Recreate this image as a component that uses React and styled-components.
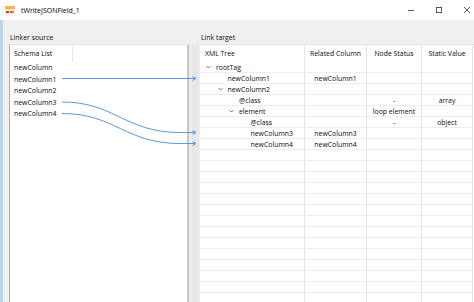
import React from 'react';
import styled, { createGlobalStyle } from 'styled-components';

const GlobalStyle = createGlobalStyle`
  *, *::before, *::after { box-sizing: border-box; }
  html, body { margin: 0; padding: 0; background: #f0f0f0; }
  body { font-family: "Open Sans", "Noto Sans", sans-serif; }
`;

const Window = styled.div`
  position: relative;
  width: 474px;
  height: 302px;
  overflow: hidden;
  display: flex;
  flex-direction: column;
  background: #f0f0f0;
  color: #0a0a0a;
  font-size: 6.9px;
`;

const TitleBar = styled.div`
  height: 20px;
  flex: none;
  background: #ffffff;
  display: flex;
  align-items: center;
  padding-left: 5px;
`;

const TitleText = styled.span`
  margin-left: 6px;
  font-size: 7px;
  color: #000;
`;

const Controls = styled.div`
  margin-left: auto;
  display: flex;
  align-items: center;
  gap: 22px;
  padding-right: 4px;
`;

const Body = styled.div`
  flex: 1;
  min-height: 0;
  display: flex;
`;

const FrameEdge = styled.div`
  width: 3px;
  flex: none;
  background: #b9d4ee;
`;

const Section = styled.div`
  display: flex;
  flex-direction: column;
  min-width: 0;
  ${p => (p.$grow ? 'flex: 1;' : `width: ${p.$width}px; flex: none;`)}
  padding-left: ${p => p.$pad || 0}px;
`;

const SectionLabel = styled.div`
  height: 24px;
  flex: none;
  padding-top: 13px;
  padding-left: 1px;
  line-height: 10px;
`;

const SourcePanel = styled.div`
  flex: 1;
  background: #fff;
  border-left: 1px solid #adadad;
  border-top: 1px solid #e2e2e2;
  border-right: 2px solid #c6c6c6;
`;

const Sash = styled.div`
  width: 11px;
  flex: none;
  background: linear-gradient(to right, #ececec 0, #ececec 3px, #e7e7e7 3px, #e7e7e7 10px, #efefef 10px);
  margin-top: 24px;
`;

const TargetPanel = styled.div`
  flex: 1;
  background: #fff;
  border-top: 1px solid #e2e2e2;
  overflow: hidden;
`;

const ListHeader = styled.div`
  height: 17px;
  display: flex;
`;

const ListHeaderCell = styled.div`
  width: 63px;
  padding-left: 4px;
  display: flex;
  align-items: center;
  border-right: 1px solid #e6e6e6;
`;

const ListRow = styled.div`
  height: 11.5px;
  line-height: 11.5px;
  padding-left: 4px;
  white-space: nowrap;
`;

const Grid = styled.div`
  display: grid;
  grid-template-columns: 105px 62px 55px 51px;
  grid-auto-rows: 11px;
  grid-template-rows: 17px;
`;

const HeadCell = styled.div`
  display: flex;
  align-items: center;
  justify-content: ${p => (p.$left ? 'flex-start' : 'center')};
  padding-left: ${p => (p.$left ? 5 : 0)}px;
  border-right: 1px solid #e4e4e4;
  white-space: nowrap;
`;

const Cell = styled.div`
  display: flex;
  align-items: center;
  justify-content: ${p => (p.$left ? 'flex-start' : 'center')};
  border-right: 1px solid #e4e4e4;
  border-bottom: 1px solid #ededed;
  white-space: nowrap;
  padding-left: ${p => (p.$left ? 6 + p.$level * 11.5 : 0)}px;
`;

const Expander = styled.span`
  width: 10px;
  flex: none;
  display: inline-flex;
  align-items: center;
`;

const Overlay = styled.svg`
  position: absolute;
  left: 0;
  top: 0;
  pointer-events: none;
`;

const AppIcon = () => (
  <svg width="10" height="9" viewBox="0 0 10 9">
    <rect x="0" y="0" width="10" height="3.5" fill="#f2b84b" />
    <rect x="0" y="3.5" width="10" height="5.5" fill="#f6efe6" />
    <rect x="1" y="5" width="3" height="2" fill="#d83b2b" />
    <rect x="5" y="5" width="3.5" height="2" fill="#e05a3a" />
  </svg>
);

const Chevron = () => (
  <svg width="5" height="4" viewBox="0 0 5 4">
    <path d="M0.5 1 L2.5 3 L4.5 1" fill="none" stroke="#555" strokeWidth="0.8" />
  </svg>
);

const sourceRows = ['newColumn', 'newColumn1', 'newColumn2', 'newColumn3', 'newColumn4'];

const treeRows = [
  { name: 'rootTag', level: 0, exp: true, rel: '', status: '', value: '' },
  { name: 'newColumn1', level: 1, exp: false, rel: 'newColumn1', status: '', value: '' },
  { name: 'newColumn2', level: 1, exp: true, rel: '', status: '', value: '' },
  { name: '@class', level: 2, exp: false, rel: '', status: '-', value: 'array' },
  { name: 'element', level: 2, exp: true, rel: '', status: 'loop element', value: '' },
  { name: '@class', level: 3, exp: false, rel: '', status: '-', value: 'object' },
  { name: 'newColumn3', level: 3, exp: false, rel: 'newColumn3', status: '', value: '' },
  { name: 'newColumn4', level: 3, exp: false, rel: 'newColumn4', status: '', value: '' },
];

const emptyRows = Array.from({ length: 15 }, (_, i) => i);

const link = '#5b97dd';

export default function App() {
  return (
    <>
      <GlobalStyle />
      <Window>
        <TitleBar>
          <AppIcon />
          <TitleText>tWriteJSONField_1</TitleText>
          <Controls>
            <svg width="6" height="6" viewBox="0 0 6 6">
              <path d="M0 3.5 H6" stroke="#333" strokeWidth="0.8" />
            </svg>
            <svg width="6" height="6" viewBox="0 0 6 6">
              <rect x="0.4" y="0.4" width="5.2" height="5.2" fill="none" stroke="#333" strokeWidth="0.8" />
            </svg>
            <svg width="6" height="6" viewBox="0 0 6 6">
              <path d="M0 0 L6 6 M6 0 L0 6" stroke="#333" strokeWidth="0.8" />
            </svg>
          </Controls>
        </TitleBar>
        <Body>
          <FrameEdge />
          <Section $width={186} $pad={6}>
            <SectionLabel>Linker source</SectionLabel>
            <SourcePanel>
              <ListHeader>
                <ListHeaderCell>Schema List</ListHeaderCell>
              </ListHeader>
              {sourceRows.map(r => (
                <ListRow key={r}>{r}</ListRow>
              ))}
            </SourcePanel>
          </Section>
          <Sash />
          <Section $grow>
            <SectionLabel>Link target</SectionLabel>
            <TargetPanel>
              <Grid>
                <HeadCell $left>XML Tree</HeadCell>
                <HeadCell>Related Column</HeadCell>
                <HeadCell>Node Status</HeadCell>
                <HeadCell>Static Value</HeadCell>
                {treeRows.map((r, i) => (
                  <React.Fragment key={i}>
                    <Cell $left $level={r.level}>
                      <Expander>{r.exp ? <Chevron /> : null}</Expander>
                      {r.name}
                    </Cell>
                    <Cell>{r.rel}</Cell>
                    <Cell>{r.status}</Cell>
                    <Cell>{r.value}</Cell>
                  </React.Fragment>
                ))}
                {emptyRows.map(i => (
                  <React.Fragment key={'e' + i}>
                    <Cell $left $level={0} />
                    <Cell />
                    <Cell />
                    <Cell />
                  </React.Fragment>
                ))}
              </Grid>
            </TargetPanel>
          </Section>
        </Body>
        <Overlay width="474" height="302" viewBox="0 0 474 302">
          <g fill="none" stroke={link} strokeWidth="1">
            <path d="M62 78.5 H196" />
            <path d="M62 102 C115 102 125 132.5 180 132.5 H196" />
            <path d="M62 113.5 C115 113.5 125 143.5 180 143.5 H196" />
            <path d="M192.5 76.5 L196 78.5 L192.5 80.5" />
            <path d="M192.5 130.5 L196 132.5 L192.5 134.5" />
            <path d="M192.5 141.5 L196 143.5 L192.5 145.5" />
          </g>
        </Overlay>
      </Window>
    </>
  );
}
